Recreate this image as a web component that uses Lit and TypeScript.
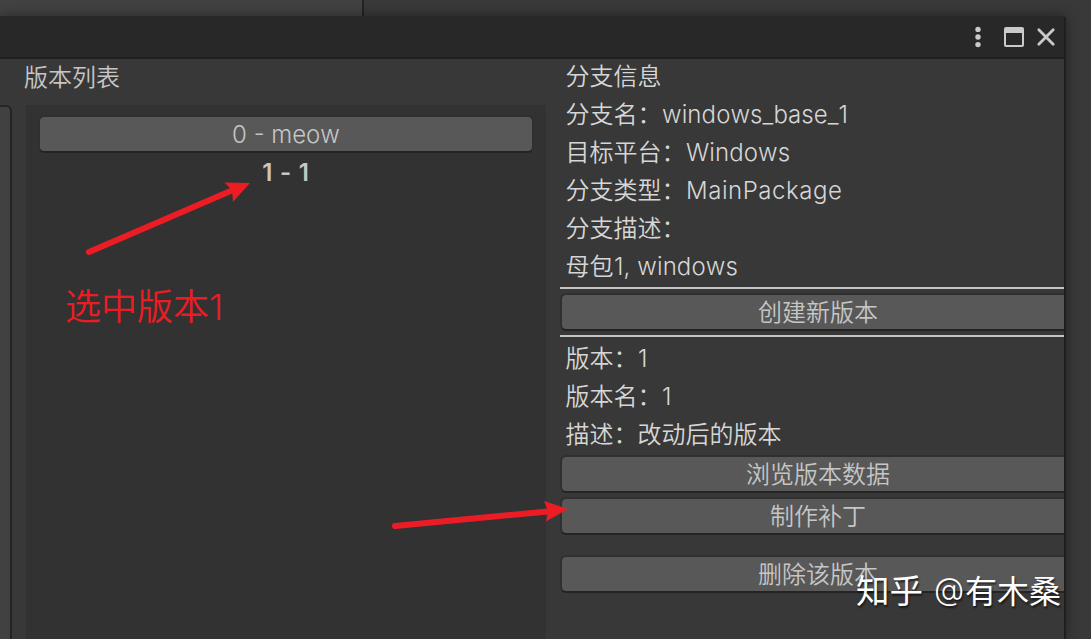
import { LitElement, html, css } from "lit";
import { customElement, property } from "lit/decorators.js";
import { classMap } from "lit/directives/class-map.js";

@customElement("editor-button")
class EditorButton extends LitElement {
   static styles = css`
      :host {
         display: block;
      }
      .button {
         display: block;
         box-sizing: border-box;
         width: 100%;
         height: 38px;
         padding: 2px 0 0;
         border: 2px solid #303030;
         border-bottom-color: #242424;
         border-radius: 6px;
         background: #585858;
         background-clip: padding-box;
         color: #c6c6c6;
         font: inherit;
         font-kerning: none;
         line-height: 32px;
         text-align: center;
         cursor: pointer;
      }
   `;

   @property() label = "";

   render() {
      return html`<button class="button">${this.label}</button>`;
   }
}

@customElement("window-controls")
class WindowControls extends LitElement {
   static styles = css`
      :host {
         display: flex;
      }
      .icon {
         display: block;
         fill: none;
         stroke: #cacaca;
      }
      .solid {
         fill: #cacaca;
         stroke: none;
      }
   `;

   render() {
      return html`
         <svg class="icon" width="92" height="42" viewBox="0 0 92 42">
            <g class="solid">
               <circle cx="6" cy="13.4" r="2.7" />
               <circle cx="6" cy="21" r="2.7" />
               <circle cx="6" cy="28.6" r="2.7" />
               <path d="M34 11h16a2 2 0 0 1 2 2v16a2 2 0 0 1-2 2H34a2 2 0 0 1-2-2V13a2 2 0 0 1 2-2zM34 17v12h16V17z" fill-rule="evenodd" />
            </g>
            <path d="M66.8 13.8L81.2 28.2M81.2 13.8L66.8 28.2" stroke-width="2.8" stroke-linecap="round" />
         </svg>
      `;
   }
}

@customElement("app-root")
class AppRoot extends LitElement {
   static styles = css`
      :host {
         display: flex;
         flex-direction: column;
         position: relative;
         box-sizing: border-box;
         width: 1091px;
         height: 639px;
         overflow: hidden;
         background: #393939;
         color: #d6d6d6;
         font-family: Inter, "Noto Sans CJK SC", sans-serif;
         font-size: 24px;
         font-weight: 350;
         font-kerning: none;
      }
      .backdrop {
         display: flex;
         flex: none;
         height: 16px;
      }
      .backdrop-tab {
         width: 362px;
         border-right: 2px solid #242424;
         background: #424242;
      }
      .window {
         display: flex;
         flex-direction: column;
         flex: 1;
         min-height: 0;
         width: 1064px;
         border-right: 2px solid #1f1f1f;
         border-top-right-radius: 4px;
         background: #383838;
         box-shadow: 0 0 14px rgba(0, 0, 0, 0.4);
      }
      .titlebar {
         display: flex;
         justify-content: flex-end;
         flex: none;
         height: 41px;
         border-bottom: 2px solid #1f1f1f;
         background: #282828;
      }
      .body {
         display: flex;
         flex: 1;
         min-height: 0;
         overflow: hidden;
      }
      .branches {
         box-sizing: border-box;
         flex: none;
         width: 12px;
         margin-top: 46px;
         border: solid #242424;
         border-width: 2px 2px 0 0;
         border-top-right-radius: 6px;
         background: #414141;
      }
      .versions {
         display: flex;
         flex: none;
         flex-direction: column;
         width: 520px;
         margin-left: 14px;
      }
      .heading {
         height: 46px;
         margin-left: -2px;
         color: #c6c6c6;
         line-height: 38px;
      }
      .list {
         flex: 1;
         padding: 10px 12px 0;
         background: #323232;
      }
      .selected {
         color: #c6c6c6;
         font-weight: 600;
         letter-spacing: 0.8px;
         line-height: 40px;
         text-align: center;
      }
      .details {
         flex: none;
         width: 516px;
         margin-left: 14px;
      }
      .row {
         height: 38px;
         padding-left: 5.5px;
         line-height: 36px;
         white-space: pre;
      }
      .value {
         margin-left: 0.5px;
         letter-spacing: 0.1px;
      }
      .wide {
         letter-spacing: 0.55px;
      }
      .create {
         padding: 4px 0;
         border: solid #c4c4c4;
         border-width: 2px 0;
      }
      .version {
         padding-top: 4px;
      }
      .actions {
         display: grid;
         gap: 4px;
      }
      .remove {
         margin-top: 16px;
      }
      .marks {
         position: absolute;
         inset: 0;
         fill: #ec1c24;
      }
      .shaft {
         stroke: #ec1c24;
         stroke-width: 6;
         stroke-linecap: round;
      }
      .note {
         position: absolute;
         left: 65px;
         top: 281px;
         color: #ec1c24;
         font-size: 36px;
         line-height: 52px;
      }
      .watermark {
         display: flex;
         align-items: baseline;
         position: absolute;
         left: 856px;
         top: 566px;
         color: #fff;
         font-family: "Noto Sans CJK SC", sans-serif;
         font-size: 32px;
         font-weight: 400;
         line-height: 46px;
         text-shadow: 1px 2px 2px rgba(0, 0, 0, 0.6);
      }
      .site {
         margin-right: 11px;
         font-size: 33.5px;
      }
      .at {
         width: 31px;
         padding-bottom: 3px;
         font-family: Inter, sans-serif;
         font-size: 31px;
         font-weight: 350;
         transform: translateY(-3px);
      }
   `;

   branch = [
      { label: "分支信息" },
      { label: "分支名：", value: "windows_base_1" },
      { label: "目标平台：", value: "Windows" },
      { label: "分支类型：", value: "MainPackage", wide: true },
      { label: "分支描述：" },
      { label: "母包", value: "1, windows" },
   ];
   version = [
      { label: "版本：", value: "1" },
      { label: "版本名：", value: "1" },
      { label: "描述：改动后的版本" },
   ];

   renderRows(rows: { label: string; value?: string; wide?: boolean }[]) {
      return rows.map(
         (row) => html`<div class="row">${row.label}<span class=${classMap({ value: true, wide: !!row.wide })}>${row.value}</span></div>`
      );
   }

   render() {
      return html`
         <div class="backdrop"><div class="backdrop-tab"></div></div>
         <div class="window">
            <div class="titlebar"><window-controls></window-controls></div>
            <div class="body">
               <div class="branches"></div>
               <div class="versions">
                  <div class="heading">版本列表</div>
                  <div class="list">
                     <editor-button label="0 - meow"></editor-button>
                     <div class="selected">1 - 1</div>
                  </div>
               </div>
               <div class="details">
                  ${this.renderRows(this.branch)}
                  <div class="create"><editor-button label="创建新版本"></editor-button></div>
                  <div class="version">${this.renderRows(this.version)}</div>
                  <div class="actions">
                     <editor-button label="浏览版本数据"></editor-button>
                     <editor-button label="制作补丁"></editor-button>
                     <editor-button class="remove" label="删除该版本"></editor-button>
                  </div>
               </div>
            </div>
         </div>
         <svg class="marks" width="1091" height="639" viewBox="0 0 1091 639">
            <path class="shaft" d="M89 252L233 190" />
            <path d="M250 183L224.500 182.500L232 190L233 202z" />
            <path class="shaft" d="M395 526L548 511.500" />
            <path d="M568 509L544 501L548 511L546 521.500z" />
         </svg>
         <div class="note">选中版本1</div>
         <div class="watermark"><span class="site">知乎</span><span class="at">@</span><span>有木桑</span></div>
      `;
   }
}
